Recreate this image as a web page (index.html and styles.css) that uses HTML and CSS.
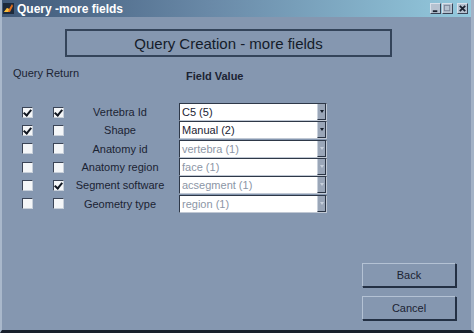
FILE: index.html
```html
<!DOCTYPE html>
<html lang="en">
<head>
  <meta charset="UTF-8">
  <title>Query -more fields</title>
  <link rel="stylesheet" href="styles.css">
</head>
<body>
  <div class="window">
    <div class="titlebar">
      <svg class="app-icon" width="11" height="11" viewBox="0 0 11 11">
        <rect width="11" height="11" fill="#1c2a3c"/>
        <path d="M1 9 L4 5 L6 6 L9 1 L10 3 L7 9 Z" fill="#e07020"/>
        <path d="M4 5 L6 6 L5 9 L1 9 Z" fill="#f4c040"/>
      </svg>
      <span class="title">Query -more fields</span>
      <div class="win-buttons">
        <span class="wbtn"><svg width="10" height="10" viewBox="0 0 10 10"><rect x="2" y="7" width="5" height="2" fill="#1a2230"/></svg></span>
        <span class="wbtn"><svg width="10" height="10" viewBox="0 0 10 10"><rect x="1.5" y="1.5" width="6" height="6" fill="none" stroke="#7a8498" stroke-width="1"/></svg></span>
        <span class="wbtn close"><svg width="10" height="10" viewBox="0 0 10 10"><path d="M2 2 L8 8 M8 2 L2 8" stroke="#1a2230" stroke-width="2"/></svg></span>
      </div>
    </div>

    <div class="content">
      <div class="header-box">Query Creation - more fields</div>

      <div class="col-heads">
        <span class="qr-head">Query Return</span>
        <span class="fv-head">Field Value</span>
      </div>

      <div class="fields">
        <span class="cb checked"></span><span class="cb checked"></span>
        <span class="label">Vertebra Id</span>
        <div class="select"><span class="val">C5 (5)</span><span class="arrow"></span></div>

        <span class="cb checked"></span><span class="cb"></span>
        <span class="label">Shape</span>
        <div class="select"><span class="val">Manual (2)</span><span class="arrow"></span></div>

        <span class="cb"></span><span class="cb"></span>
        <span class="label">Anatomy id</span>
        <div class="select disabled"><span class="val">vertebra (1)</span><span class="arrow"></span></div>

        <span class="cb"></span><span class="cb"></span>
        <span class="label">Anatomy region</span>
        <div class="select disabled"><span class="val">face (1)</span><span class="arrow"></span></div>

        <span class="cb"></span><span class="cb checked"></span>
        <span class="label">Segment software</span>
        <div class="select disabled"><span class="val">acsegment (1)</span><span class="arrow"></span></div>

        <span class="cb"></span><span class="cb"></span>
        <span class="label">Geometry type</span>
        <div class="select disabled"><span class="val">region (1)</span><span class="arrow"></span></div>
      </div>

      <div class="actions">
        <button class="btn">Back</button>
        <button class="btn">Cancel</button>
      </div>
    </div>
  </div>
</body>
</html>
```

FILE: styles.css
```css
* {
  margin: 0;
  padding: 0;
  box-sizing: border-box;
}

body {
  font-family: 'Liberation Sans', sans-serif;
  background: #8597b0;
  width: 474px;
  height: 333px;
  overflow: hidden;
}

.window {
  width: 474px;
  height: 333px;
  background: #8597b0;
  border-left: 2px solid #a9b8cb;
  border-right: 3px solid #a3b3c6;
  border-bottom: 3px solid #18202c;
  display: flex;
  flex-direction: column;
  color: #1b2333;
}

/* barra de título */
.titlebar {
  height: 17px;
  display: flex;
  align-items: center;
  padding-left: 1px;
  background: linear-gradient(to right, #3f5878 0%, #6a8aa8 45%, #94cade 100%);
}

.app-icon {
  margin-right: 3px;
}

.title {
  color: #fff;
  font-size: 12px;
  font-weight: bold;
}

.win-buttons {
  margin-left: auto;
  display: flex;
  gap: 1px;
  margin-right: 3px;
}

.wbtn {
  width: 11px;
  height: 11px;
  background: #b6c2d0;
  border: 1px solid;
  border-color: #d8e0ea #3a4456 #3a4456 #d8e0ea;
  display: flex;
  align-items: center;
  justify-content: center;
}

.wbtn svg {
  width: 9px;
  height: 9px;
}

.wbtn.close {
  margin-left: 3px;
}

/* conteúdo */
.content {
  flex: 1;
  display: flex;
  flex-direction: column;
}

.header-box {
  margin: 12px 0 0 63px;
  width: 327px;
  height: 28px;
  border: 2px solid #34445a;
  display: flex;
  align-items: center;
  justify-content: center;
  font-size: 15px;
  color: #141c2a;
}

.col-heads {
  position: relative;
  height: 46px;
  font-size: 11px;
}

.qr-head {
  position: absolute;
  left: 11px;
  top: 10px;
}

.fv-head {
  position: absolute;
  left: 184px;
  top: 13px;
  font-weight: bold;
}

.fields {
  display: grid;
  grid-template-columns: 20px 11px 20px 11px 112px 3px 148px;
  grid-auto-rows: 18.33px;
  align-items: center;
}

.cb {
  width: 11px;
  height: 11px;
  background: #f4f6f8;
  border: 1px solid;
  border-color: #3a4456 #c8d0da #c8d0da #3a4456;
  position: relative;
}

.cb:nth-child(4n+1) {
  grid-column: 2;
}

.cb:nth-child(4n+2) {
  grid-column: 4;
}

.cb.checked::after {
  content: '';
  position: absolute;
  left: 2px;
  top: 0px;
  width: 3px;
  height: 6px;
  border: solid #101620;
  border-width: 0 2px 2px 0;
  transform: rotate(40deg);
}

.label {
  grid-column: 5;
  text-align: center;
  font-size: 11px;
  white-space: nowrap;
}

.select {
  grid-column: 7;
  height: 18px;
  display: flex;
  background: #fff;
  border: 1px solid;
  border-color: #2e3848 #c0c8d4 #c0c8d4 #2e3848;
}

.val {
  flex: 1;
  font-size: 11px;
  padding-left: 2px;
  line-height: 16px;
  color: #1b2333;
}

.arrow {
  width: 9px;
  background: #9aa6b8;
  border-left: 1px solid #c9d1dc;
  border-right: 1px solid #2a3444;
  border-bottom: 1px solid #2a3444;
  position: relative;
}

.arrow::after {
  content: '';
  position: absolute;
  left: 2px;
  top: 6px;
  border: 2px solid transparent;
  border-top: 3px solid #141c28;
}

.select.disabled .val {
  color: #8c96a6;
}

.select.disabled .arrow::after {
  border-top-color: #c8d0dc;
}

/* botões */
.actions {
  margin: 50px 15px 0 auto;
  display: flex;
  flex-direction: column;
  gap: 9px;
}

.btn {
  width: 94px;
  height: 24px;
  background: #8597b0;
  border: 1px solid;
  border-color: #b4c2d4 #233044 #233044 #b4c2d4;
  box-shadow: 1px 1px 0 #233044;
  font-family: 'Liberation Sans', sans-serif;
  font-size: 11px;
  color: #1b2333;
}
```
